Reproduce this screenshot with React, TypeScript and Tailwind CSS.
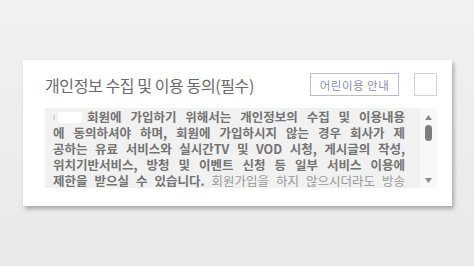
const font = { fontFamily: '"Noto Sans CJK KR", "Noto Sans", sans-serif' };

const lines = [
  '에 동의하셔야 하며, 회원에 가입하시지 않는 경우 회사가 제',
  '공하는 유료 서비스와 실시간TV 및 VOD 시청, 게시글의 작성,',
  '위치기반서비스, 방청 및 이벤트 신청 등 일부 서비스 이용에',
];

export default function App() {
  return (
    <div
      className="w-[474px] h-[266px] bg-gradient-to-b from-[#f1f1f1] to-[#e9e9e9] pt-[60px] pl-[23px]"
      style={font}
    >
      <div className="w-[429px] h-[146px] bg-white shadow-[2px_3px_4px_rgba(0,0,0,0.28)] pl-[22px] pr-[15px] pt-[13px]">
        <div className="flex items-center h-[23px]">
          <h1 className="text-[16px] leading-[20px] text-[#6a6a6a] tracking-[-0.4px]">
            개인정보 수집 및 이용 동의(필수)
          </h1>
          <button className="ml-auto w-[89px] h-[23px] border border-[#b9bcd6] bg-white text-[11.5px] leading-[14px] text-[#8a8eb6] tracking-[0.5px]">
            어린이용 안내
          </button>
          <div className="ml-[15px] w-[23px] h-[23px] border border-[#d4d4d4] bg-white" />
        </div>
        <div className="mt-[12px] h-[80px] flex bg-[#f1f1f1]">
          <div className="flex-1 pl-[8px] pt-[1px] text-[12.5px] leading-[16px] font-bold text-[#737373]">
            <div className="flex items-center h-[16px]">
              <span className="text-[8px] leading-[10px] font-normal text-[#bbb] w-[4px]">ı</span>
              <span className="w-[24px] h-[11px] bg-white ml-[1px]" />
              <span className="ml-[5px] flex-1 text-justify [text-align-last:justify]">
                회원에 가입하기 위해서는 개인정보의 수집 및 이용내용
              </span>
            </div>
            {lines.map((l) => (
              <div key={l} className="h-[16px] text-justify [text-align-last:justify]">
                {l}
              </div>
            ))}
            <div className="h-[16px] text-justify [text-align-last:justify]">
              제한을 받으실 수 있습니다.{' '}
              <span className="font-normal text-[#999]">회원가입을 하지 않으시더라도 방송</span>
            </div>
          </div>
          <div className="w-[17px] ml-[15px] bg-[#f8f8f8] flex flex-col items-center pt-[7px] pb-[5px]">
            <svg width="7" height="5" viewBox="0 0 7 5">
              <path d="M3.5 0L7 5H0z" fill="#8a8a8a" />
            </svg>
            <div className="mt-[5px] w-[7px] h-[16px] rounded-full bg-[#7d7d7d]" />
            <div className="flex-1" />
            <svg width="7" height="5" viewBox="0 0 7 5">
              <path d="M0 0h7L3.5 5z" fill="#8a8a8a" />
            </svg>
          </div>
        </div>
      </div>
    </div>
  );
}
